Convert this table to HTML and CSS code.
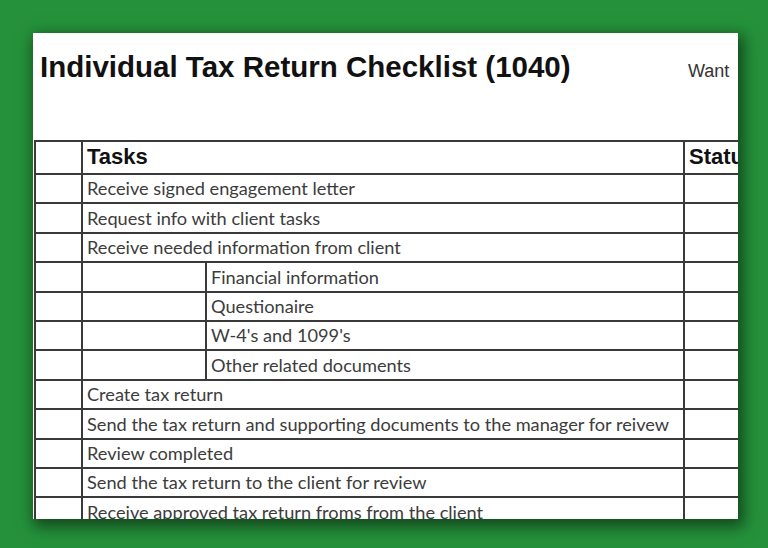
FILE: index.html
```html
<!DOCTYPE html>
<html>
<head>
<meta charset="utf-8">
<link rel="stylesheet" href="styles.css">
</head>
<body>
<div class="sheet">
  <div class="titlebar">
    <h1 class="title">Individual Tax Return Checklist (1040)</h1>
    <span class="want">Want</span>
  </div>
  <table class="grid">
    <colgroup>
      <col class="c-num"><col class="c-indent"><col class="c-task"><col class="c-status">
    </colgroup>
    <tr class="head">
      <td></td>
      <td colspan="2" class="hcell">Tasks</td>
      <td class="hcell">Status</td>
    </tr>
    <tr><td></td><td colspan="2" class="txt">Receive signed engagement letter</td><td></td></tr>
    <tr><td></td><td colspan="2" class="txt">Request info with client tasks</td><td></td></tr>
    <tr><td></td><td colspan="2" class="txt">Receive needed information from client</td><td></td></tr>
    <tr><td></td><td></td><td class="txt">Financial information</td><td></td></tr>
    <tr><td></td><td></td><td class="txt">Questionaire</td><td></td></tr>
    <tr><td></td><td></td><td class="txt">W-4's and 1099's</td><td></td></tr>
    <tr><td></td><td></td><td class="txt">Other related documents</td><td></td></tr>
    <tr><td></td><td colspan="2" class="txt">Create tax return</td><td></td></tr>
    <tr><td></td><td colspan="2" class="txt">Send the tax return and supporting documents to the manager for reivew</td><td></td></tr>
    <tr><td></td><td colspan="2" class="txt">Review completed</td><td></td></tr>
    <tr><td></td><td colspan="2" class="txt">Send the tax return to the client for review</td><td></td></tr>
    <tr><td></td><td colspan="2" class="txt">Receive approved tax return froms from the client</td><td></td></tr>
  </table>
</div>
</body>
</html>
```
FILE: styles.css
```css
html, body {
  margin: 0;
  padding: 0;
}
body {
  width: 768px;
  height: 548px;
  overflow: hidden;
  background: #25923b;
}
.sheet {
  margin: 33px 0 0 33px;
  width: 705px;
  height: 486px;
  background: #ffffff;
  overflow: hidden;
  box-shadow: 3px 5px 14px 3px rgba(0, 0, 0, 0.5);
}
.titlebar {
  display: flex;
  align-items: baseline;
  padding: 17px 0 0 7px;
  height: 85px;
  box-sizing: border-box;
}
.title {
  margin: 0;
  font-family: "Liberation Sans", Arial, sans-serif;
  font-weight: bold;
  font-size: 29.5px;
  color: #111;
  width: 648px;
  white-space: nowrap;
}
.want {
  font-family: "Liberation Sans", Arial, sans-serif;
  font-size: 18px;
  color: #333;
}
.grid {
  margin: 22px 0 0 1px;
  border-collapse: collapse;
  table-layout: fixed;
  width: 780px;
}
.c-num { width: 47px; }
.c-indent { width: 124px; }
.c-task { width: 478px; }
.c-status { width: 131px; }
.grid td {
  border: 2px solid #3a3a3a;
  padding: 0 0 3px 4px;
  height: 24.4px;
  vertical-align: bottom;
  white-space: nowrap;
  overflow: hidden;
}
.grid tr.head td {
  height: 28px;
}
.hcell {
  font-family: "Liberation Sans", Arial, sans-serif;
  font-weight: bold;
  font-size: 22px;
  color: #111;
}
.txt {
  font-family: Lato, "Open Sans", sans-serif;
  font-size: 18.2px;
  line-height: 22px;
  color: #3c3c3c;
}
```
